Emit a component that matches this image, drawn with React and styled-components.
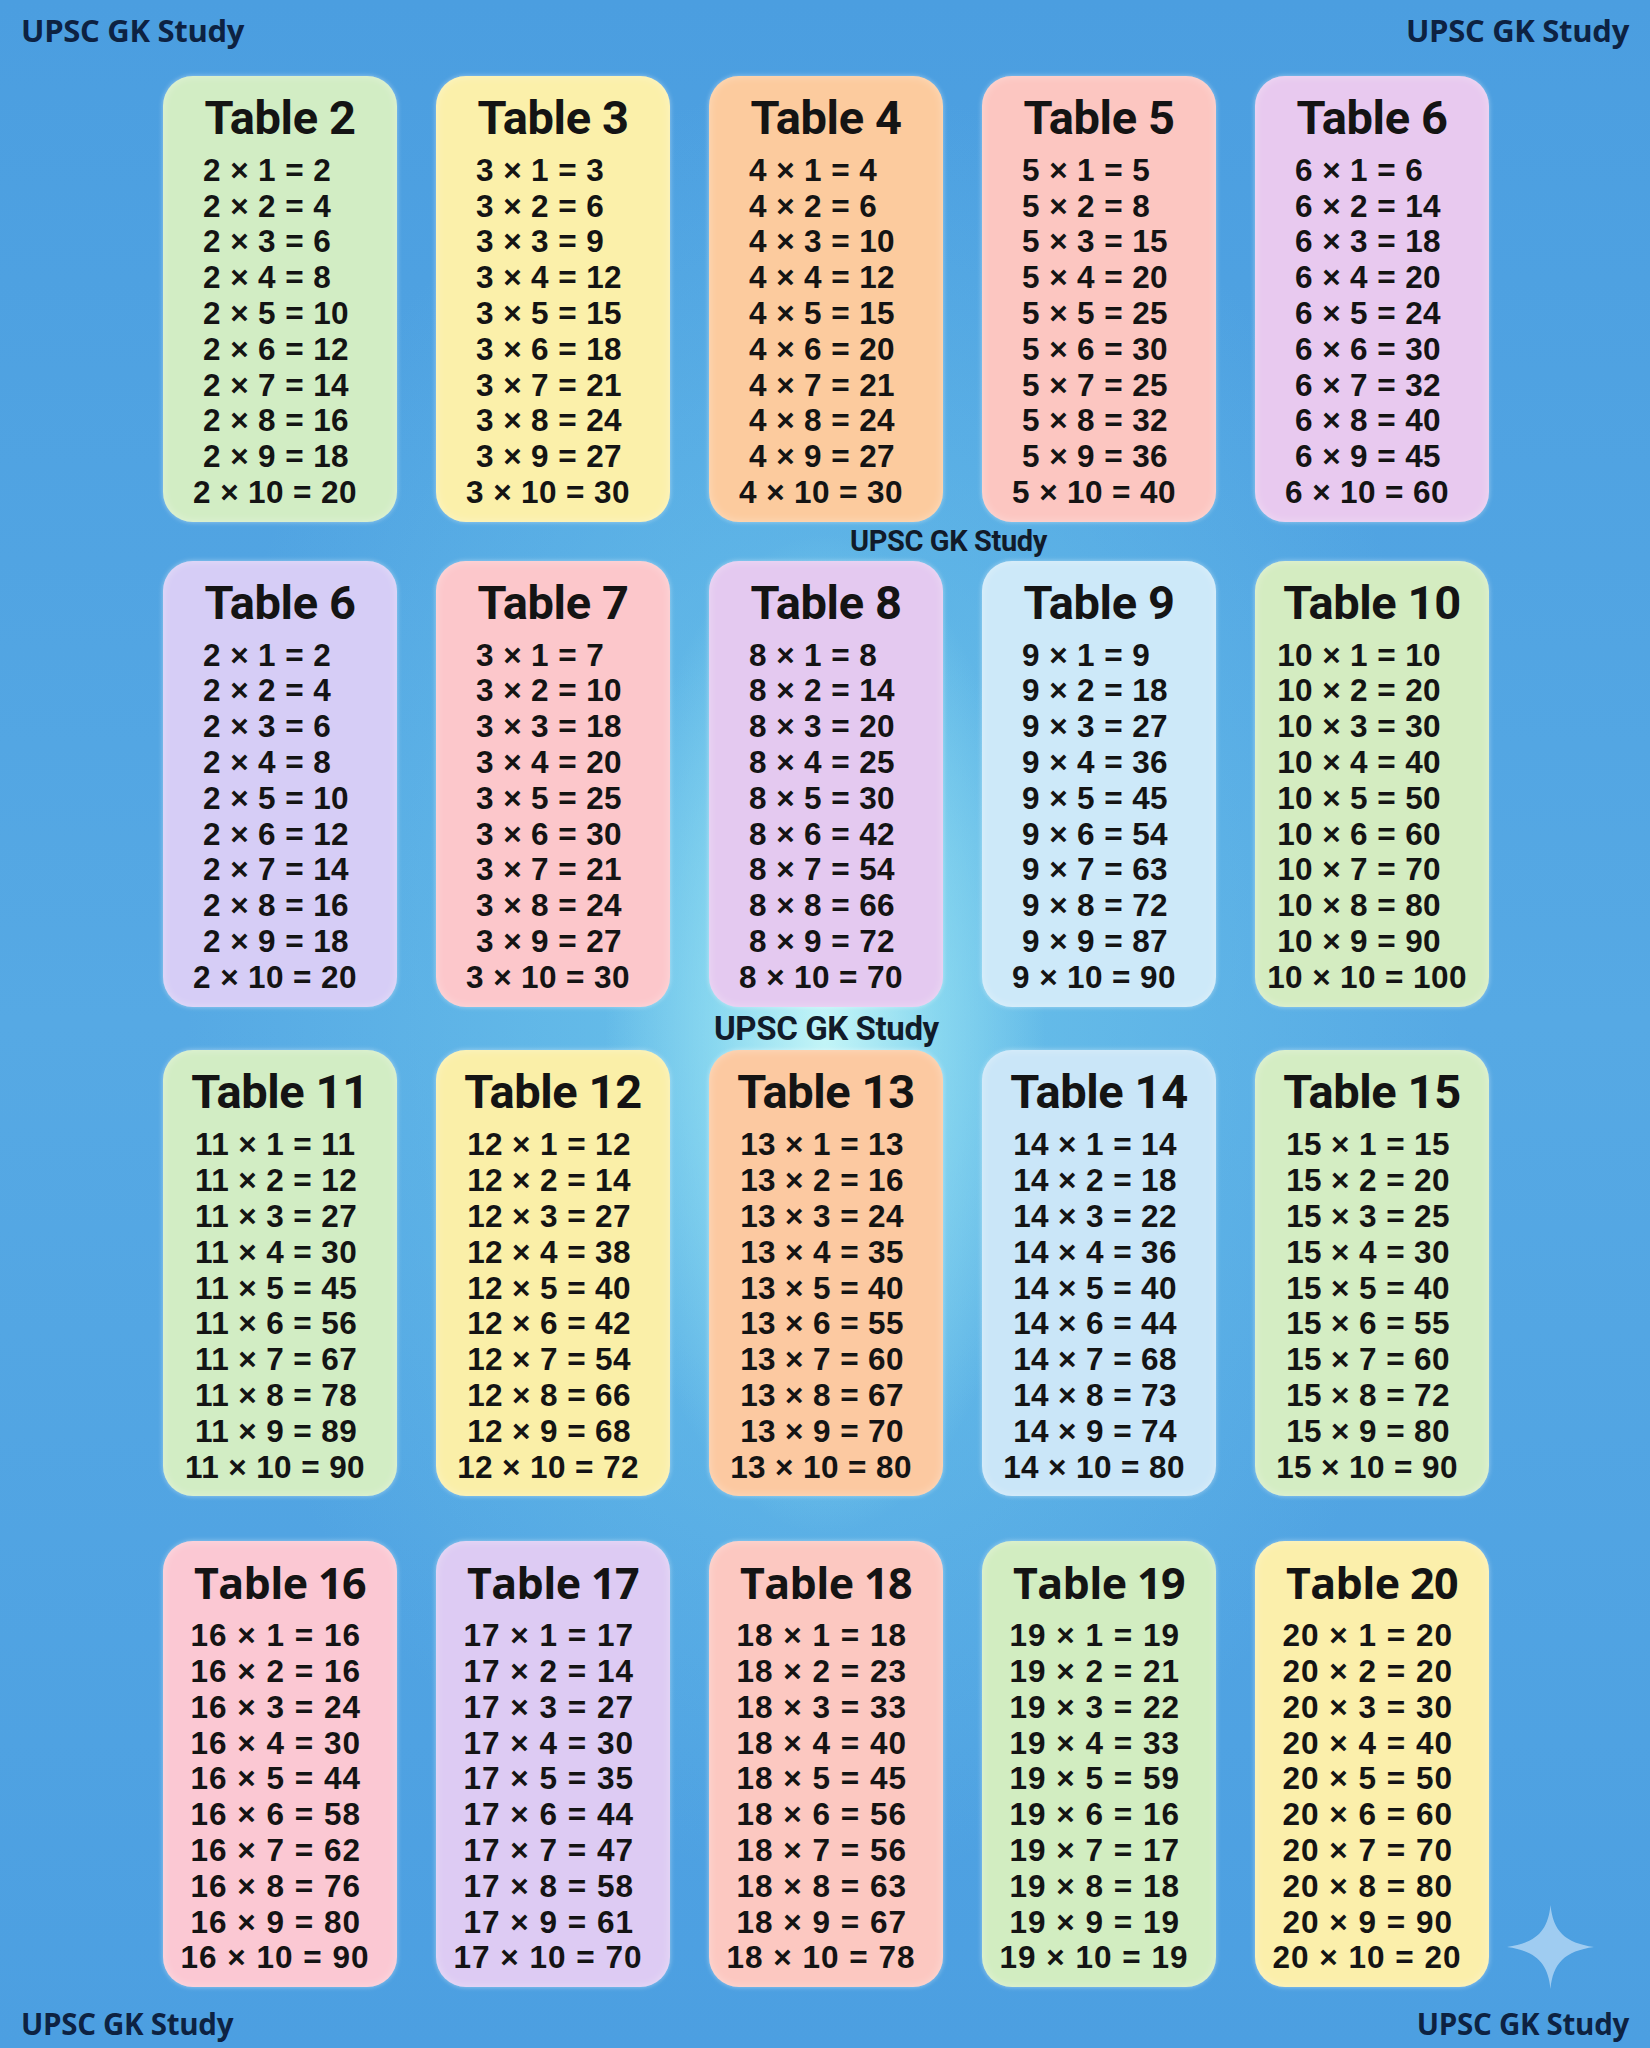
import React from 'react';
import styled, { createGlobalStyle } from 'styled-components';

const GlobalStyle = createGlobalStyle`
  html, body {
    margin: 0;
    padding: 0;
  }
  body {
    font-family: "Roboto", "Liberation Sans", sans-serif;
  }
`;

const Page = styled.div`
  position: relative;
  width: 1650px;
  height: 2048px;
  overflow: hidden;
  display: flex;
  flex-direction: column;
  background:
    radial-gradient(ellipse 220px 500px at 50% 50.5%, rgba(200, 248, 248, 0.95), rgba(160, 232, 244, 0.6) 50%, rgba(130, 212, 240, 0) 100%),
    radial-gradient(ellipse 640px 900px at 50% 48%, rgba(112, 202, 236, 0.8), rgba(112, 202, 236, 0) 100%),
    linear-gradient(180deg, #4b9ee0 0%, #56a9e4 50%, #4c9fe1 100%);
`;

const CornerBar = styled.header`
  display: flex;
  justify-content: space-between;
  align-items: flex-start;
  height: ${p => p.$height}px;
  padding: ${p => p.$top}px 21px 0 21px;
  box-sizing: border-box;
`;

const Mark = styled.span`
  font-family: "Open Sans", "Liberation Sans", sans-serif;
  font-weight: 700;
  font-size: ${p => p.$size}px;
  line-height: 36px;
  color: #0d2242;
  letter-spacing: -0.3px;
`;

const Caption = styled.div`
  display: flex;
  align-items: center;
  height: ${p => p.$height}px;
  padding-left: ${p => p.$offset}px;
  font-family: "Roboto", "Liberation Sans", sans-serif;
  font-weight: 700;
  font-size: ${p => p.$size}px;
  line-height: 1;
  color: #111b2a;
  letter-spacing: -0.4px;
`;

const Spacer = styled.div`
  height: ${p => p.$height}px;
`;

const CardRow = styled.section`
  display: grid;
  grid-template-columns: repeat(5, 234px);
  column-gap: 39px;
  padding-left: 163px;
`;

const Card = styled.div`
  height: 446px;
  box-sizing: border-box;
  padding-top: 19px;
  border-radius: 30px;
  background: ${p => p.$bg};
  box-shadow: 0 0 5px rgba(255, 255, 255, 0.45), inset 0 0 10px rgba(255, 255, 255, 0.35);
  display: flex;
  flex-direction: column;
  align-items: center;
  color: #141414;
`;

const Title = styled.h2`
  margin: 0 0 12px;
  font-family: ${p => (p.$wide ? '"Open Sans", "Liberation Sans", sans-serif' : '"Roboto", "Liberation Sans", sans-serif')};
  font-size: ${p => (p.$wide ? 43 : 47)}px;
  line-height: 46px;
  font-weight: 700;
  letter-spacing: ${p => (p.$wide ? '-0.6px' : '-0.4px')};
  white-space: nowrap;
`;

const List = styled.ul`
  list-style: none;
  margin: 0;
  padding: 0;
  display: flex;
  flex-direction: column;
  align-items: flex-start;
`;

const Line = styled.li`
  font-family: "Liberation Sans", Arial, sans-serif;
  font-size: 31.5px;
  line-height: 35.8px;
  font-weight: 700;
  white-space: nowrap;
  letter-spacing: ${p => (p.$wide ? '1px' : '0.4px')};
  margin-left: ${p => (p.$last ? -10 : 0)}px;
`;

const Sparkle = styled.svg`
  position: absolute;
  left: 1507px;
  top: 1905px;
  width: 87px;
  height: 84px;
`;

const grid = [
  {
    wide: false,
    tables: [
      { title: 'Table 2', base: 2, bg: '#d2edc4', res: [2, 4, 6, 8, 10, 12, 14, 16, 18, 20] },
      { title: 'Table 3', base: 3, bg: '#fbf0aa', res: [3, 6, 9, 12, 15, 18, 21, 24, 27, 30] },
      { title: 'Table 4', base: 4, bg: '#fccb9e', res: [4, 6, 10, 12, 15, 20, 21, 24, 27, 30] },
      { title: 'Table 5', base: 5, bg: '#fcc6c1', res: [5, 8, 15, 20, 25, 30, 25, 32, 36, 40] },
      { title: 'Table 6', base: 6, bg: '#e8c9ef', res: [6, 14, 18, 20, 24, 30, 32, 40, 45, 60] },
    ],
  },
  {
    wide: false,
    tables: [
      { title: 'Table 6', base: 2, bg: '#d6cdf6', res: [2, 4, 6, 8, 10, 12, 14, 16, 18, 20] },
      { title: 'Table 7', base: 3, bg: '#fcc7cb', res: [7, 10, 18, 20, 25, 30, 21, 24, 27, 30] },
      { title: 'Table 8', base: 8, bg: '#e4c9f0', res: [8, 14, 20, 25, 30, 42, 54, 66, 72, 70] },
      { title: 'Table 9', base: 9, bg: '#cde9f9', res: [9, 18, 27, 36, 45, 54, 63, 72, 87, 90] },
      { title: 'Table 10', base: 10, bg: '#d4ecc1', res: [10, 20, 30, 40, 50, 60, 70, 80, 90, 100] },
    ],
  },
  {
    wide: false,
    tables: [
      { title: 'Table 11', base: 11, bg: '#d2edc4', res: [11, 12, 27, 30, 45, 56, 67, 78, 89, 90] },
      { title: 'Table 12', base: 12, bg: '#faefa8', res: [12, 14, 27, 38, 40, 42, 54, 66, 68, 72] },
      { title: 'Table 13', base: 13, bg: '#fcc9a1', res: [13, 16, 24, 35, 40, 55, 60, 67, 70, 80] },
      { title: 'Table 14', base: 14, bg: '#cae6f8', res: [14, 18, 22, 36, 40, 44, 68, 73, 74, 80] },
      { title: 'Table 15', base: 15, bg: '#d4edc3', res: [15, 20, 25, 30, 40, 55, 60, 72, 80, 90] },
    ],
  },
  {
    wide: true,
    tables: [
      { title: 'Table 16', base: 16, bg: '#fbc8d3', res: [16, 16, 24, 30, 44, 58, 62, 76, 80, 90] },
      { title: 'Table 17', base: 17, bg: '#ddcbf3', res: [17, 14, 27, 30, 35, 44, 47, 58, 61, 70] },
      { title: 'Table 18', base: 18, bg: '#fcc8c1', res: [18, 23, 33, 40, 45, 56, 56, 63, 67, 78] },
      { title: 'Table 19', base: 19, bg: '#d2edc1', res: [19, 21, 22, 33, 59, 16, 17, 18, 19, 19] },
      { title: 'Table 20', base: 20, bg: '#fbefab', res: [20, 20, 30, 40, 50, 60, 70, 80, 90, 20] },
    ],
  },
];

const between = [
  { height: 39, offset: 850, size: 29, text: 'UPSC GK Study' },
  { height: 44, offset: 714, size: 33, text: 'UPSC GK Study' },
  { height: 45 },
];

function TableCard({ table, wide }) {
  return (
    <Card $bg={table.bg}>
      <Title $wide={wide}>{table.title}</Title>
      <List>
        {table.res.map((r, i) => (
          <Line key={i} $wide={wide} $last={i === 9}>
            {table.base} × {i + 1} = {r}
          </Line>
        ))}
      </List>
    </Card>
  );
}

export default function App() {
  return (
    <>
      <GlobalStyle />
      <Page>
        <CornerBar $height={76} $top={12}>
          <Mark $size={31}>UPSC GK Study</Mark>
          <Mark $size={31}>UPSC GK Study</Mark>
        </CornerBar>

        {grid.map((row, ri) => (
          <React.Fragment key={ri}>
            <CardRow>
              {row.tables.map((t, ti) => (
                <TableCard key={ti} table={t} wide={row.wide} />
              ))}
            </CardRow>
            {between[ri] && (between[ri].text ? (
              <Caption $height={between[ri].height} $offset={between[ri].offset} $size={between[ri].size}>
                {between[ri].text}
              </Caption>
            ) : (
              <Spacer $height={between[ri].height} />
            ))}
          </React.Fragment>
        ))}

        <CornerBar $height={61} $top={19}>
          <Mark $size={29.5}>UPSC GK Study</Mark>
          <Mark $size={29.5}>UPSC GK Study</Mark>
        </CornerBar>

        <Sparkle viewBox="0 0 87 84">
          <path
            d="M43.5 0 C46 26 58 38 87 42 C58 46 46 58 43.5 84 C41 58 29 46 0 42 C29 38 41 26 43.5 0 Z"
            fill="#aed3f3"
            opacity="0.85"
          />
        </Sparkle>
      </Page>
    </>
  );
}
